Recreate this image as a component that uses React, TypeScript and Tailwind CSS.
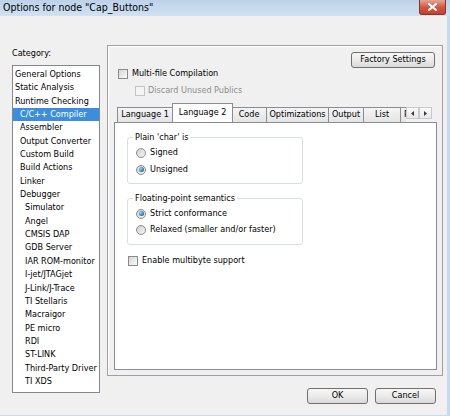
import React from "react";

const FONT = { fontFamily: '"DejaVu Sans Condensed", "Liberation Sans", sans-serif' };

const categories: { label: string; level: number }[] = [
  { label: "General Options", level: 0 },
  { label: "Static Analysis", level: 0 },
  { label: "Runtime Checking", level: 0 },
  { label: "C/C++ Compiler", level: 1 },
  { label: "Assembler", level: 1 },
  { label: "Output Converter", level: 1 },
  { label: "Custom Build", level: 1 },
  { label: "Build Actions", level: 1 },
  { label: "Linker", level: 1 },
  { label: "Debugger", level: 1 },
  { label: "Simulator", level: 2 },
  { label: "Angel", level: 2 },
  { label: "CMSIS DAP", level: 2 },
  { label: "GDB Server", level: 2 },
  { label: "IAR ROM-monitor", level: 2 },
  { label: "I-jet/JTAGjet", level: 2 },
  { label: "J-Link/J-Trace", level: 2 },
  { label: "TI Stellaris", level: 2 },
  { label: "Macraigor", level: 2 },
  { label: "PE micro", level: 2 },
  { label: "RDI", level: 2 },
  { label: "ST-LINK", level: 2 },
  { label: "Third-Party Driver", level: 2 },
  { label: "TI XDS", level: 2 },
];

// last tab is cut off by the scroll arrows, only its first letter shows
const tabs = [
  { label: "Language 1", w: "w-[56px]" },
  { label: "Language 2", w: "w-[61px]", active: true },
  { label: "Code", w: "w-[36px]" },
  { label: "Optimizations", w: "w-[63px]" },
  { label: "Output", w: "w-[36px]" },
  { label: "List", w: "w-[38px]" },
  { label: "P", w: "w-[30px]" },
];

function Checkbox({ disabled }: { disabled?: boolean }) {
  return (
    <span
      className={
        "box-border h-[10px] w-[10px] shrink-0 border " +
        (disabled
          ? "border-[#c4c4c4] bg-[#f4f4f4]"
          : "border-[#8a8a8a] bg-gradient-to-br from-[#d6d6d6] to-[#fbfbfb]")
      }
    />
  );
}

function Radio({ checked }: { checked?: boolean }) {
  return (
    <span className="grid h-[10px] w-[10px] shrink-0 place-items-center rounded-full border border-[#8c8c8c] bg-gradient-to-br from-[#cfcfcf] to-[#f6f6f6]">
      {checked && (
        <span className="h-[5px] w-[5px] rounded-full bg-[radial-gradient(circle_at_35%_35%,#9fdcf5,#1d6aa0_70%)]" />
      )}
    </span>
  );
}

function Button({ children, w }: { children: React.ReactNode; w: string }) {
  return (
    <div
      className={
        "flex h-[16px] items-center justify-center rounded-[3px] border border-[#707070] bg-gradient-to-b from-[#f6f6f6] via-[#ebebeb] to-[#d9d9d9] text-[9px] text-black " +
        w
      }
    >
      {children}
    </div>
  );
}

function Group({ title, children, gap }: { title: string; children: React.ReactNode; gap: string }) {
  return (
    <div className="relative box-border h-[47px] w-[176px] rounded-[3px] border border-[#d5dfe5]">
      <span className="absolute -top-[7px] left-[5px] bg-white px-[2px] leading-[12px]">{title}</span>
      <div className={"flex flex-col pl-[8px] pt-[8px] " + gap}>{children}</div>
    </div>
  );
}

function Option({ label, checked }: { label: string; checked?: boolean }) {
  return (
    <div className="flex h-[13px] items-center gap-[4px]">
      <Radio checked={checked} />
      <span>{label}</span>
    </div>
  );
}

export default function App() {
  return (
    <div style={FONT} className="flex h-[416px] w-[450px] flex-col overflow-hidden bg-[#c6daf0] text-[9px] text-black">
      {/* title bar */}
      <div className="flex h-[16px] shrink-0 items-start justify-between bg-gradient-to-b from-[#bcd2ea] to-[#d2e1f2]">
        <span className="pl-[3px] pt-[1px] text-[10.5px] leading-[13px]">Options for node "Cap_Buttons"</span>
        <div className="mr-[4px] flex h-[15px] w-[27px] items-center justify-center rounded-b-[3px] border border-t-0 border-[#8c3328] bg-gradient-to-b from-[#e3a597] via-[#cf5a45] to-[#c2402c]">
          <svg width="9" height="8" viewBox="0 0 9 8">
            <path d="M1 1 L8 7 M8 1 L1 7" stroke="#ffffff" strokeWidth="2" strokeLinecap="square" />
          </svg>
        </div>
      </div>

      {/* dialog body */}
      <div className="mb-px mr-[3px] flex flex-1 bg-[#f0f0f0] pl-[12px]">
        {/* category */}
        <div className="w-[88px]">
          <div className="pt-[31px] leading-[12px]">Category:</div>
          <div className="mt-[6px] box-border h-[328px] border border-[#828790] bg-white pt-[2px]">
            {categories.map((c) => {
              const sel = c.label === "C/C++ Compiler";
              const pad = c.level === 0 ? "pl-[2px]" : c.level === 1 ? "pl-[7px]" : "pl-[12px]";
              return (
                <div
                  key={c.label}
                  className={
                    "h-[13.35px] whitespace-nowrap leading-[13.35px] " +
                    pad +
                    (sel ? " bg-[#3d8ddd] text-white" : "")
                  }
                >
                  {c.label}
                </div>
              );
            })}
          </div>
        </div>

        {/* options */}
        <div className="ml-[7px] pt-[29px]">
          <div className="box-border flex h-[331px] w-[336px] flex-col border border-[#a0a0a0] shadow-[inset_1px_1px_0_#ffffff]">
            <div className="flex justify-end pr-[7px] pt-[6px]">
              <Button w="w-[84px]">Factory Settings</Button>
            </div>
            <div className="flex h-[12px] items-center gap-[4px] pl-[10px]">
              <Checkbox />
              <span>Multi-file Compilation</span>
            </div>
            <div className="mt-[5px] flex h-[12px] items-center gap-[3px] pl-[27px] text-[#8d8d8d]">
              <Checkbox disabled />
              <span>Discard Unused Publics</span>
            </div>

            {/* tab control */}
            <div className="ml-[6px] mt-[6px] w-[323px]">
              <div className="flex h-[19px] items-start">
                <div className="flex h-[19px] w-[292px] items-end overflow-hidden pl-[3px]">
                  {tabs.map((t, i) =>
                    t.active ? (
                      <div
                        key={t.label}
                        className={
                          "relative z-10 -mx-[1px] -mb-px box-border flex h-[20px] shrink-0 items-start justify-center border border-b-0 border-[#898c95] bg-white pt-[2px] " +
                          t.w
                        }
                      >
                        {t.label}
                      </div>
                    ) : (
                      <div
                        key={t.label}
                        className={
                          "box-border flex h-[15px] shrink-0 items-center border border-b-0 border-[#898c95] bg-gradient-to-b from-[#f5f5f5] to-[#e4e4e4] " +
                          (i > 0 ? "-ml-px " : "") +
                          (t.label === "P" ? "pl-[3px] " : "justify-center ") +
                          t.w
                        }
                      >
                        {t.label}
                      </div>
                    )
                  )}
                </div>
                <div className="mt-[4px] flex h-[12px] w-[27px]">
                  {["M4 1 L1 3.5 L4 6 Z", "M1 1 L4 3.5 L1 6 Z"].map((d) => (
                    <div
                      key={d}
                      className="flex h-[12px] w-[13px] items-center justify-center border border-[#c9c9c9] bg-gradient-to-b from-[#fafafa] to-[#e8e8e8]"
                    >
                      <svg width="5" height="7" viewBox="0 0 5 7">
                        <path d={d} fill="#3a3a3a" />
                      </svg>
                    </div>
                  ))}
                </div>
              </div>
              <div className="box-border h-[248px] border border-[#898c95] bg-white pl-[12px] pt-[14px]">
                <Group title="Plain 'char' is" gap="gap-[4px]">
                  <Option label="Signed" />
                  <Option label="Unsigned" checked />
                </Group>
                <div className="mt-[14px]">
                  <Group title="Floating-point semantics" gap="gap-[3px]">
                    <Option label="Strict conformance" checked />
                    <Option label="Relaxed (smaller and/or faster)" />
                  </Group>
                </div>
                <div className="ml-[1px] mt-[10px] flex h-[12px] items-center gap-[4px]">
                  <Checkbox />
                  <span>Enable multibyte support</span>
                </div>
              </div>
            </div>
          </div>

          <div className="mt-[12px] flex w-[336px] justify-end gap-[7px] pr-[7px]">
            <Button w="w-[61px]">OK</Button>
            <Button w="w-[61px]">Cancel</Button>
          </div>
        </div>
      </div>
    </div>
  );
}
